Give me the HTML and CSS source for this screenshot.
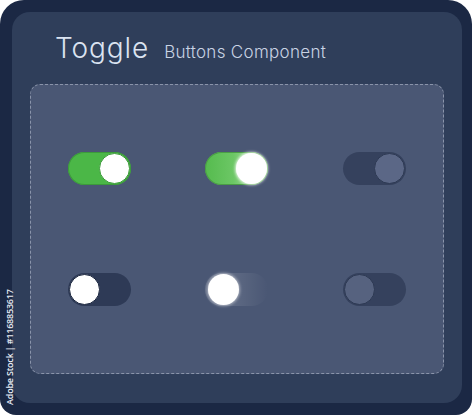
FILE: index.html
```html
<!DOCTYPE html>
<html>
  <head>
    <title>Toggle Buttons Component</title>
    <meta charset="UTF-8">
    <link rel="stylesheet" href="styles.css">
  </head>
  <body>
    <div class="frame">
      <div class="panel">
        <div class="header">
          <span class="title">Toggle</span>
          <span class="subtitle">Buttons Component</span>
        </div>
        <div class="board">
          <div class="cell">
            <div class="toggle toggle-on"><span class="knob"></span></div>
          </div>
          <div class="cell">
            <div class="toggle toggle-on-soft"><span class="knob"></span></div>
          </div>
          <div class="cell">
            <div class="toggle toggle-on-disabled"><span class="knob"></span></div>
          </div>
          <div class="cell">
            <div class="toggle toggle-off"><span class="knob"></span></div>
          </div>
          <div class="cell">
            <div class="toggle toggle-off-soft"><span class="knob"></span></div>
          </div>
          <div class="cell">
            <div class="toggle toggle-off-disabled"><span class="knob"></span></div>
          </div>
        </div>
      </div>
      <div class="stamp">Adobe Stock | #1168853617</div>
    </div>
  </body>
</html>
```
FILE: styles.css
```css
body {
  margin: 0;
  padding: 0;
  background-color: #ffffff;
  font-family: Inter, "Open Sans", sans-serif;
  overflow: hidden;
}

.frame {
  position: relative;
  width: 472px;
  height: 415px;
  box-sizing: border-box;
  padding: 12px 10px 0 12px;
  background-color: #1b2844;
  border-radius: 24px 24px 16px 16px;
}

.panel {
  height: 391px;
  box-sizing: border-box;
  padding: 0 18px;
  background-color: #2f3e5a;
  border-radius: 18px;
}

.header {
  display: flex;
  align-items: baseline;
  gap: 15px;
  height: 60px;
  padding: 19px 0 0 25px;
  box-sizing: border-box;
  color: #dbe3f1;
}

.title {
  font-size: 28px;
  font-weight: 300;
  letter-spacing: 0.9px;
}

.subtitle {
  font-size: 17px;
  font-weight: 300;
  letter-spacing: 0.3px;
  color: #c9d3e4;
}

.board {
  display: grid;
  grid-template-columns: repeat(3, 1fr);
  grid-template-rows: 121px 121px;
  height: 290px;
  box-sizing: border-box;
  margin-top: 12px;
  padding-top: 23px;
  background-color: #4a5774;
  border: 1px dashed #8a94aa;
  border-radius: 10px;
}

.cell {
  display: flex;
  justify-content: center;
  align-items: center;
}

.toggle {
  display: flex;
  align-items: center;
  width: 63px;
  height: 33px;
  box-sizing: border-box;
  padding: 1px;
  border-radius: 17px;
}

.knob {
  display: block;
  width: 31px;
  height: 31px;
  box-sizing: border-box;
  border-radius: 50%;
  background-color: #ffffff;
}

.toggle-on {
  justify-content: flex-end;
  background-color: #4bb747;
  box-shadow: inset 0 0 0 1px #3c9a3b;
}

.toggle-on .knob {
  border: 1.5px solid #3e9c3c;
}

.toggle-on-soft {
  justify-content: flex-end;
  background: linear-gradient(90deg, #55bb4e 0%, #6cc765 45%, #9bd894 72%, #6fc068 100%);
  box-shadow: inset 0 0 0 1px #4a9d45;
}

.toggle-on-soft .knob {
  box-shadow: 0 0 3px 1px rgba(255, 255, 255, 0.8);
}

.toggle-on-disabled {
  justify-content: flex-end;
  background-color: #35415d;
}

.toggle-on-disabled .knob {
  background-color: #5b6786;
  border: 1.5px solid #2e3a54;
}

.toggle-off {
  background-color: #2e3a56;
}

.toggle-off .knob {
  border: 1.5px solid #1f2a42;
}

.toggle-off-soft {
  padding-left: 3px;
  background: linear-gradient(90deg, rgba(255, 255, 255, 0.12) 40%, rgba(255, 255, 255, 0.04) 80%, rgba(255, 255, 255, 0) 100%);
}

.toggle-off-soft .knob {
  box-shadow: 0 0 3px 1px rgba(255, 255, 255, 0.5);
}

.toggle-off-disabled {
  background-color: #35415d;
}

.toggle-off-disabled .knob {
  background-color: #56627f;
  border: 1.5px solid #2e3a54;
}

/* vertical credit line along the left edge */
.stamp {
  position: absolute;
  left: 3px;
  top: 405px;
  transform: rotate(-90deg);
  transform-origin: left top;
  font-family: "Open Sans", sans-serif;
  font-size: 9px;
  font-weight: 600;
  letter-spacing: -0.2px;
  color: #e8edf5;
  white-space: nowrap;
}
```
